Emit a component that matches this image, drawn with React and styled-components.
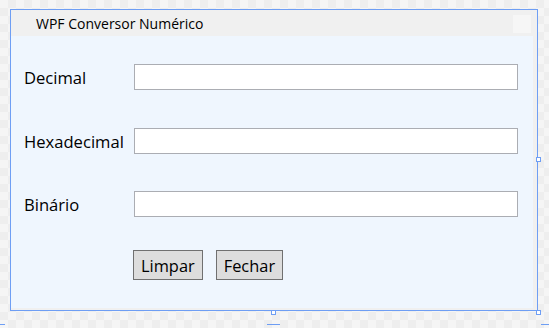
import React from 'react';
import styled, { createGlobalStyle } from 'styled-components';

const GlobalStyle = createGlobalStyle`
  html, body {
    margin: 0;
    padding: 0;
  }
  body {
    width: 549px;
    height: 328px;
    overflow: hidden;
    font-family: "Open Sans", "Noto Sans", sans-serif;
    background-color: #f5f5f5;
    background-image:
      linear-gradient(45deg, #eeeeee 25%, transparent 25%, transparent 75%, #eeeeee 75%),
      linear-gradient(45deg, #eeeeee 25%, transparent 25%, transparent 75%, #eeeeee 75%);
    background-size: 16px 16px;
    background-position: 0 0, 8px 8px;
  }
`;

const fields = [
  { id: 'dec', label: 'Decimal', gap: 28 },
  { id: 'hex', label: 'Hexadecimal', gap: 38 },
  { id: 'bin', label: 'Binário', gap: 37 },
];

const Stage = styled.div`
  position: relative;
  padding: 9px 0 0 10px;
`;

const Window = styled.div`
  position: relative;
  width: 526px;
  height: 300px;
  border: 1px solid #6e9ef4;
  background: #f0f0f0;
  display: flex;
  flex-direction: column;
`;

const TitleBar = styled.div`
  height: 26px;
  flex: none;
  display: flex;
  align-items: center;
  justify-content: space-between;
  padding: 0 6px 0 25px;
  font-size: 14px;
  color: #000;
`;

const ControlBox = styled.div`
  width: 18px;
  height: 18px;
  margin-top: 1px;
  background: #f6f6f6;
`;

const Client = styled.div`
  flex: 1;
  margin: 0 4px 2px 0;
  background: #eff6fe;
  padding: 0 0 0 13px;
`;

const Row = styled.div`
  display: flex;
  align-items: center;
  margin-top: ${p => p.gap}px;
`;

const Label = styled.label`
  width: 110px;
  font-size: 16.6px;
  color: #000;
`;

const TextBox = styled.input`
  box-sizing: border-box;
  width: 384px;
  height: 26px;
  margin: 0;
  border: 1px solid #abadb3;
  background: #fff;
  outline: none;
`;

const Buttons = styled.div`
  display: flex;
  gap: 13px;
  margin: 33px 0 0 109px;
`;

const Button = styled.button`
  box-sizing: border-box;
  height: 30px;
  padding: 0 7px;
  border: 1px solid #707070;
  background: #dddddd;
  font-family: inherit;
  font-size: 16.4px;
  color: #000;
  border-radius: 0;
`;

const Handle = styled.div`
  position: absolute;
  width: 3px;
  height: 3px;
  border: 1px solid #6e9ef4;
  background: #fff;
  left: ${p => p.x}px;
  top: ${p => p.y}px;
`;

const Tick = styled.div`
  position: absolute;
  height: 1px;
  background: #6e9ef4;
  left: ${p => p.x}px;
  top: 324px;
  width: ${p => p.w}px;
`;

export default function App() {
  return (
    <>
      <GlobalStyle />
      <Stage>
        <Window>
          <TitleBar>
            <span>WPF Conversor Numérico</span>
            <ControlBox />
          </TitleBar>
          <Client>
            {fields.map(f => (
              <Row key={f.id} gap={f.gap}>
                <Label htmlFor={f.id}>{f.label}</Label>
                <TextBox id={f.id} type="text" />
              </Row>
            ))}
            <Buttons>
              <Button>Limpar</Button>
              <Button>Fechar</Button>
            </Buttons>
          </Client>
        </Window>
        <Handle x={536} y={157} />
        <Handle x={271} y={310} />
        <Handle x={536} y={310} />
        <Tick x={0} w={5} />
        <Tick x={267} w={13} />
        <Tick x={541} w={8} />
      </Stage>
    </>
  );
}
